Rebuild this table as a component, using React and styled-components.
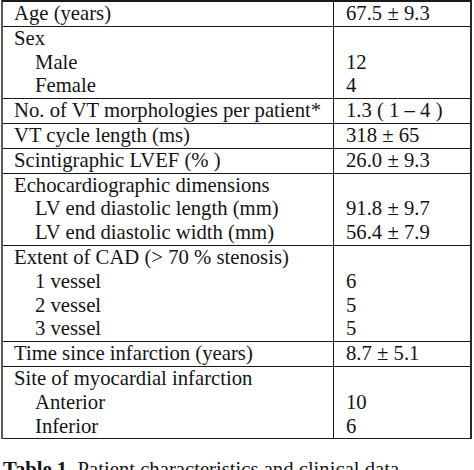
import React from 'react';
import styled, { createGlobalStyle } from 'styled-components';

const GlobalStyle = createGlobalStyle`
  html, body {
    margin: 0;
    padding: 0;
    background: #ffffff;
  }
  body {
    font-family: "Liberation Serif", "Times New Roman", serif;
    color: #141414;
    overflow: hidden;
  }
`;

const Page = styled.div`
  width: 474px;
  height: 470px;
  overflow: hidden;
  padding-left: 1px;
  box-sizing: border-box;
`;

const Table = styled.div`
  width: 471px;
  border-top: 2px solid #1a1a1a;
  border-left: 2px solid #5a5a5a;
  border-right: 2px solid #2a2a2a;
  box-sizing: border-box;
`;

const Group = styled.div`
  display: grid;
  grid-template-columns: 331px 1fr;
  border-bottom: 1.5px solid #1a1a1a;
`;

const LabelCol = styled.div`
  padding-left: 11px;
  border-right: 1.5px solid #1a1a1a;
`;

const ValueCol = styled.div`
  padding-left: 12px;
`;

const Line = styled.div`
  height: 23.8px;
  line-height: 23.8px;
  font-size: 20.7px;
  white-space: nowrap;
  padding-left: ${(p) => (p.$indent ? '21px' : '0')};
`;

const Caption = styled.div`
  margin-top: 18px;
  padding-left: 2px;
  font-size: 20.7px;
  line-height: 24px;
  white-space: nowrap;
`;

const Bold = styled.span`
  font-weight: bold;
`;

const groups = [
  { title: 'Age (years)', value: '67.5 ± 9.3' },
  {
    title: 'Sex',
    items: [
      ['Male', '12'],
      ['Female', '4'],
    ],
  },
  { title: 'No. of VT morphologies per patient*', value: '1.3 ( 1 – 4 )' },
  { title: 'VT cycle length (ms)', value: '318 ± 65' },
  { title: 'Scintigraphic LVEF (% )', value: '26.0 ± 9.3' },
  {
    title: 'Echocardiographic dimensions',
    items: [
      ['LV end diastolic length (mm)', '91.8 ± 9.7'],
      ['LV end diastolic width (mm)', '56.4 ± 7.9'],
    ],
  },
  {
    title: 'Extent of CAD (> 70 % stenosis)',
    items: [
      ['1 vessel', '6'],
      ['2 vessel', '5'],
      ['3 vessel', '5'],
    ],
  },
  { title: 'Time since infarction (years)', value: '8.7 ± 5.1' },
  {
    title: 'Site of myocardial infarction',
    items: [
      ['Anterior', '10'],
      ['Inferior', '6'],
    ],
  },
];

const App = () => (
  <Page>
    <GlobalStyle />
    <Table>
      {groups.map((g) => (
        <Group key={g.title}>
          <LabelCol>
            <Line>{g.title}</Line>
            {g.items && g.items.map(([label]) => <Line $indent key={label}>{label}</Line>)}
          </LabelCol>
          <ValueCol>
            <Line>{g.value || ''}</Line>
            {g.items && g.items.map(([label, v]) => <Line key={label}>{v}</Line>)}
          </ValueCol>
        </Group>
      ))}
    </Table>
    <Caption>
      <Bold>Table 1.</Bold> Patient characteristics and clinical data
    </Caption>
  </Page>
);

export default App;
